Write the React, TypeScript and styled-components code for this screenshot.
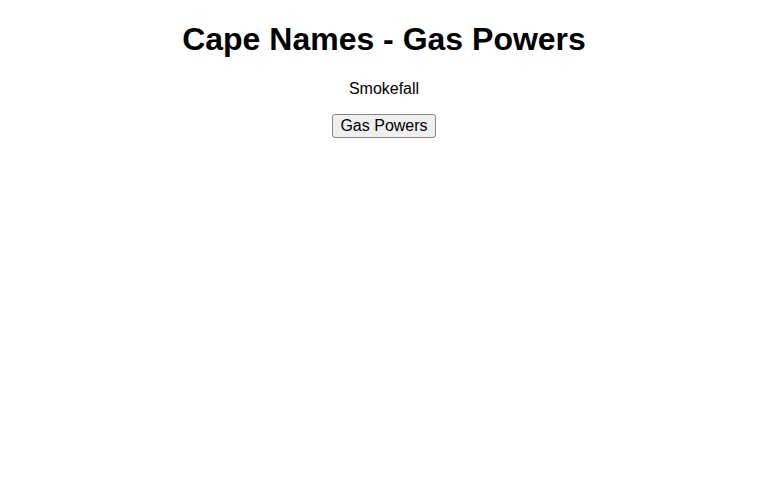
import React from "react";
import styled, { createGlobalStyle } from "styled-components";

const GlobalStyle = createGlobalStyle`
  body {
    margin: 0 8px;
    background: #ffffff;
    color: #000000;
    font-family: "Liberation Sans", Arial, sans-serif;
  }
`;

const Page = styled.main`
  text-align: center;
`;

const Title = styled.h1`
  font-size: 32px;
  font-weight: bold;
  margin: 21.44px 0;
`;

const Subtitle = styled.p`
  font-size: 16px;
  margin: 16px 0;
`;

const ActionRow = styled.p`
  margin: 16px 0;
`;

const ActionButton = styled.button`
  font-family: "Liberation Sans", Arial, sans-serif;
  font-size: 16px;
  color: #000000;
  background: #efefef;
  border: 1px solid #858585;
  border-radius: 3px;
  padding: 2px 7px;
  cursor: pointer;
`;

export default function App() {
  return (
    <>
      <GlobalStyle />
      <Page>
        <Title>Cape Names - Gas Powers</Title>
        <Subtitle>Smokefall</Subtitle>
        <ActionRow>
          <ActionButton type="button">Gas Powers</ActionButton>
        </ActionRow>
      </Page>
    </>
  );
}
